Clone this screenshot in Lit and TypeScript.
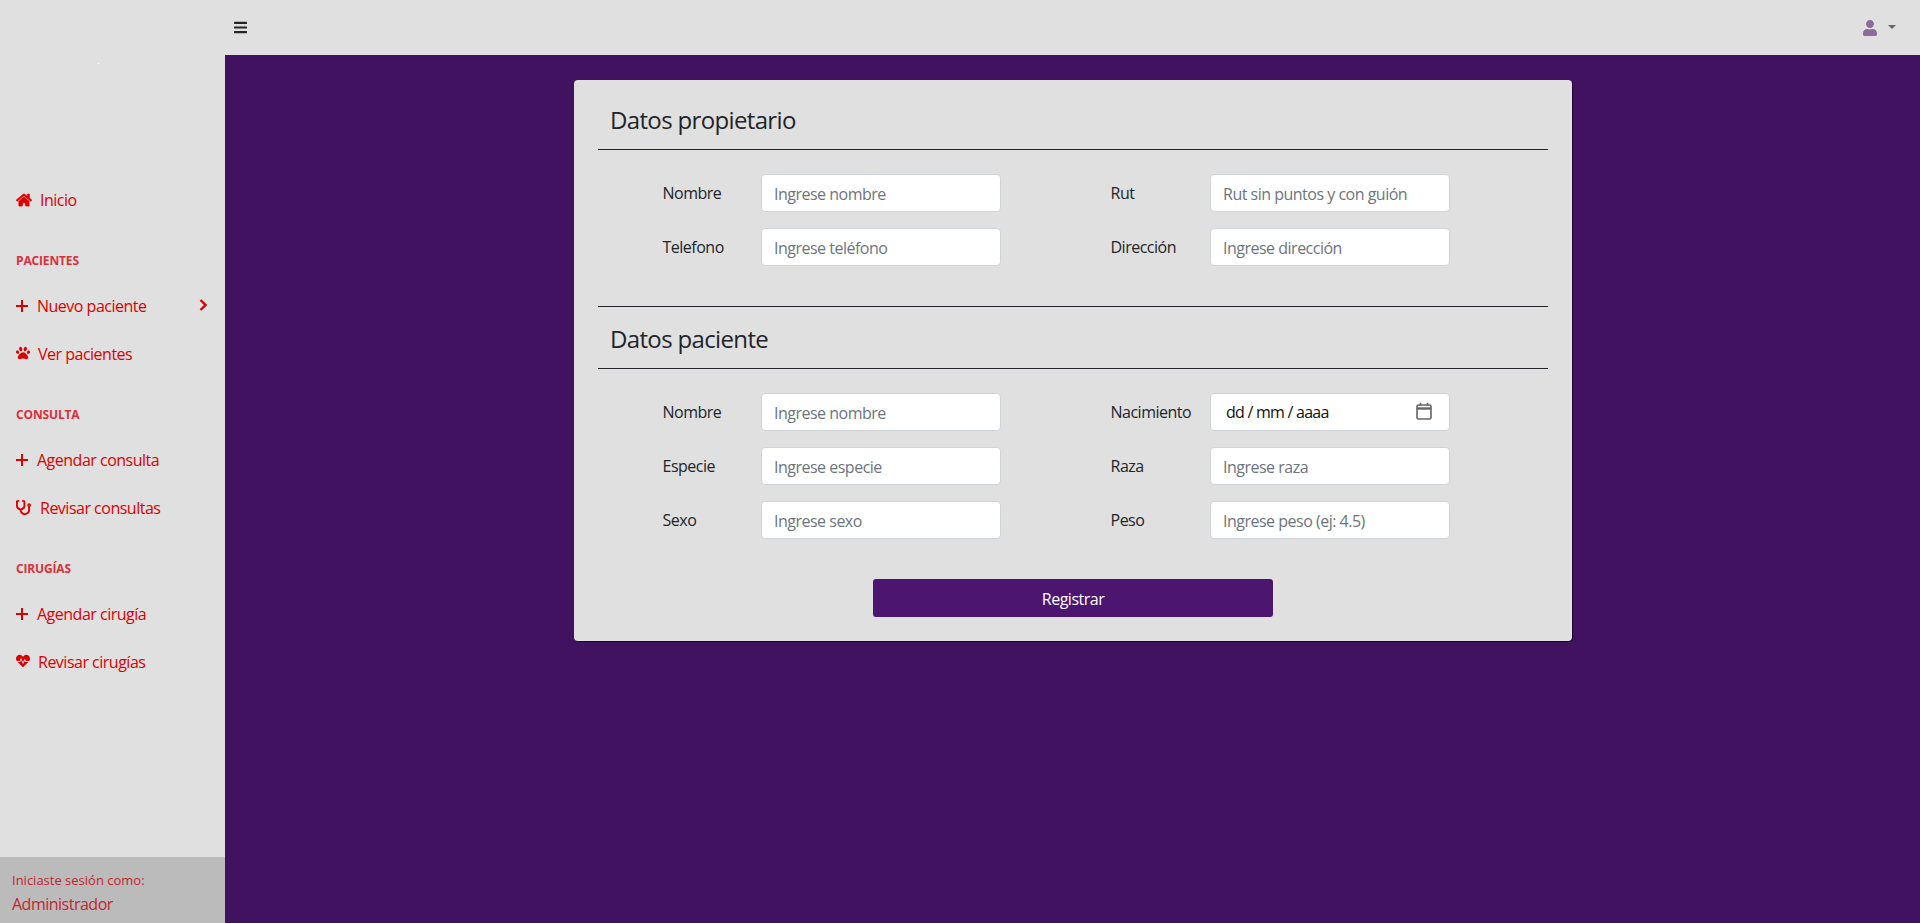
import { LitElement, html, css, svg } from "lit";
import { customElement } from "lit/decorators.js";

const ICONS: Record<string, [number, unknown]> = {
  home: [576, svg`<path d="M280.37 148.26L96 300.11V464a16 16 0 0 0 16 16l112.06-.29a16 16 0 0 0 15.92-16V368a16 16 0 0 1 16-16h64a16 16 0 0 1 16 16v95.64a16 16 0 0 0 16 16.05L464 480a16 16 0 0 0 16-16V300L295.67 148.26a12.19 12.19 0 0 0-15.3 0zM571.6 251.47L488 182.56V44.05a12 12 0 0 0-12-12h-56a12 12 0 0 0-12 12v72.61L318.47 43a48 48 0 0 0-61 0L4.34 251.47a12 12 0 0 0-1.6 16.9l25.5 31A12 12 0 0 0 45.15 301l235.22-193.74a12.19 12.19 0 0 1 15.3 0L530.9 301a12 12 0 0 0 16.9-1.6l25.5-31a12 12 0 0 0-1.7-16.93z" stroke="currentColor" stroke-width="18"/>`],
  paw: [512, svg`<path d="M256 224c-79.41 0-192 122.76-192 200.25 0 34.9 26.81 55.75 71.74 55.75 48.84 0 81.09-25.08 120.26-25.08 39.51 0 71.85 25.08 120.26 25.08 44.93 0 71.74-20.85 71.74-55.75C448 346.76 335.41 224 256 224zm-147.28-12.61c-10.4-34.65-42.44-57.09-71.56-50.13-29.12 6.96-44.29 40.69-33.89 75.34 10.4 34.65 42.44 57.09 71.56 50.13 29.12-6.96 44.29-40.69 33.89-75.34zm84.72-20.78c30.94-8.14 46.42-49.94 34.58-93.36s-46.52-72.01-77.46-63.87-46.42 49.94-34.58 93.36c11.84 43.42 46.52 72.02 77.46 63.87zm281.39-29.34c-29.12-6.96-61.15 15.48-71.56 50.13-10.4 34.65 4.77 68.38 33.89 75.34 29.12 6.96 61.15-15.48 71.56-50.13 10.4-34.65-4.77-68.38-33.89-75.34zm-156.27 29.34c30.94 8.14 65.62-20.45 77.46-63.87 11.84-43.42-3.64-85.21-34.58-93.36s-65.62 20.45-77.46 63.87c-11.84 43.42 3.64 85.22 34.58 93.36z"/>`],
  steth: [512, svg`<path d="M447.1 112c-34.2.5-62.3 28.4-63 62.6-.5 24.3 12.5 45.6 32 56.8V344c0 57.3-50.2 104-112 104-60 0-109.2-44.1-111.9-99.2C265 333.8 320 269.2 320 192V36.6c0-11.4-8.1-21.3-19.3-23.5L237.8.5c-13-2.6-25.6 5.8-28.2 18.8L206.4 35c-2.6 13 5.8 25.6 18.8 28.2l30.7 6.1v121.4c0 52.9-42.2 96.7-95.1 97.2-53.4.5-96.9-42.7-96.9-96V69.4l30.7-6.1c13-2.6 21.4-15.2 18.8-28.2l-3.1-15.7C107.7 6.4 95.1-2 82.1.6L19.3 13C8.1 15.3 0 25.1 0 36.6V192c0 77.3 55.1 142 128.1 156.8C130.7 439.2 208.6 512 304 512c97 0 176-75.4 176-168V231.4c19.1-11.1 32-31.7 32-55.4 0-35.7-29.2-64.5-64.9-64zm.9 80c-8.8 0-16-7.2-16-16s7.2-16 16-16 16 7.2 16 16-7.2 16-16 16z"/>`],
  heart: [512, svg`<path d="M320.2 243.8l-49.7 99.4c-6 12.1-23.4 11.7-28.9-.6l-56.9-126.3-30 71.7H60.6l182.5 186.5c7.1 7.3 18.6 7.3 25.7 0L451.4 288H342.3l-22.1-44.2zM473.7 73.9l-2.4-2.5c-51.5-52.6-135.8-52.6-187.4 0L256 100l-27.9-28.5c-51.5-52.7-135.9-52.7-187.4 0l-2.4 2.4C-10.4 123.7-12.5 203 31 256h102.4l35.9-86.2c5.4-12.9 23.6-13.2 29.4-.4l58.2 129.3 49-97.9c5.9-11.8 22.7-11.8 28.6 0l27.6 55.2H481c43.5-53 41.4-132.3-7.3-182.1z"/>`],
  bars: [448, svg`<path d="M16 132h416c8.837 0 16-7.163 16-16V76c0-8.837-7.163-16-16-16H16C7.163 60 0 67.163 0 76v40c0 8.837 7.163 16 16 16zm0 160h416c8.837 0 16-7.163 16-16v-40c0-8.837-7.163-16-16-16H16c-8.837 0-16 7.163-16 16v40c0 8.837 7.163 16 16 16zm0 160h416c8.837 0 16-7.163 16-16v-40c0-8.837-7.163-16-16-16H16c-8.837 0-16 7.163-16 16v40c0 8.837 7.163 16 16 16z"/>`],
  user: [448, svg`<path d="M224 256c70.7 0 128-57.3 128-128S294.7 0 224 0 96 57.3 96 128s57.3 128 128 128zm89.6 32h-16.7c-22.2 10.2-46.9 16-72.9 16s-50.6-5.8-72.9-16h-16.7C60.2 288 0 348.2 0 422.4V464c0 26.5 21.5 48 48 48h352c26.5 0 48-21.5 48-48v-41.6c0-74.2-60.2-134.4-134.4-134.4z"/>`],
};

function fa(name: string, cls: string) {
  const [w, body] = ICONS[name];
  return html`<svg class=${cls} viewBox="0 0 ${w} 512" fill="currentColor" aria-hidden="true">${body}</svg>`;
}

const plus = html`<svg class="plus" viewBox="0 0 12 12" fill="none" stroke="currentColor" stroke-width="2" aria-hidden="true"><path d="M6 0v12M0 6h12"/></svg>`;

@customElement("app-root")
export class AppRoot extends LitElement {
  static styles = css`
    :host {
      display: grid;
      grid-template-columns: 225px 1fr;
      height: 923px;
      width: 1920px;
      overflow: hidden;
      font-family: "Open Sans", "Noto Sans", sans-serif;
      font-size: 16px;
      color: #212529;
      background: #401260;
    }
    .side {
      background: #e0e0e0;
      display: flex;
      flex-direction: column;
      color: #dc0000;
      height: 923px;
    }
    .logo { height: 176px; padding: 63px 0 0 98px; box-sizing: border-box; }
    .dot { width: 1px; height: 1px; background: #fff; }
    .item { height: 48px; display: flex; align-items: center; padding: 0 16px; box-sizing: border-box; white-space: nowrap; letter-spacing: -0.5px; }
    .ic { display: block; flex: none; }
    .ic-home { width: 16px; height: 14px; margin-right: 8px; margin-top: -1px; }
    .ic-paw { width: 14px; height: 14px; margin-right: 8px; margin-top: -2px; }
    .ic-steth { width: 15px; height: 15px; margin-right: 9px; margin-top: -2px; }
    .ic-heart { width: 14px; height: 14px; margin-right: 8px; margin-top: -2px; }
    .plus { width: 12px; height: 12px; margin-right: 9px; flex: none; margin-top: -1px; }
    .chev { width: 8px; height: 12px; margin-left: auto; margin-right: 2px; flex: none; margin-top: -3px; }
    .head { height: 58px; padding: 28px 16px 0; box-sizing: border-box; font-size: 12px; font-weight: 700; line-height: 18px; color: #d9303c; letter-spacing: -0.15px; }
    .foot { margin-top: auto; height: 66px; background: #bbbbbb; padding: 14px 12px 0; box-sizing: border-box; color: #c2262f; white-space: nowrap; }
    .f1 { font-size: 13px; line-height: 18px; }
    .f2 { font-size: 16px; line-height: 24px; margin-top: 3px; letter-spacing: -0.5px; }

    .right { display: flex; flex-direction: column; min-width: 0; }
    .top { height: 55px; background: #e0e0e0; flex: none; display: flex; align-items: center; justify-content: space-between; padding: 0 24px 0 9px; box-sizing: border-box; }
    .ic-bars { width: 13px; height: 15px; margin-top: -1px; color: #212529; }
    .usr { display: flex; align-items: center; gap: 11px; }
    .ic-user { width: 14px; height: 16px; color: #8c6a9e; margin-top: 1px; }
    .caret { width: 0; height: 0; border-left: 4px solid transparent; border-right: 4px solid transparent; border-top: 4px solid #666; margin-top: -2px; }

    .main { flex: 1; padding: 25px 0 0 349px; }
    .card { width: 998px; height: 561px; box-sizing: border-box; background: #e0e0e0; border-radius: 4px; padding: 0 24px; box-shadow: 1px 1px 1px rgba(0,0,0,.55); display: flex; flex-direction: column; }
    h3 { margin: 0; font-size: 24px; font-weight: 400; line-height: 29px; padding-left: 12px; color: #212529; letter-spacing: -0.65px; flex: none; }
    .t1 { padding-top: 25px; height: 70px; box-sizing: border-box; border-bottom: 1px solid #212529; }
    .t2 { height: 63px; padding-top: 17px; box-sizing: border-box; border-top: 1px solid #212529; border-bottom: 1px solid #212529; }
    .grid { display: grid; grid-template-columns: 448px 448px; grid-auto-rows: 38px; row-gap: 16px; align-content: start; padding: 24px 0 0 65px; flex: none; box-sizing: border-box; }
    .g1 { height: 156px; }
    .g2 { height: 210px; }
    .row { display: flex; align-items: center; height: 38px; }
    label { width: 98.5px; margin-left: -0.5px; flex: none; letter-spacing: -0.5px; }
    .row:nth-child(even) label { width: 99.5px; }
    input, .date { box-sizing: border-box; width: 240px; height: 38px; margin: 0; border: 1px solid #ced4da; border-radius: 4px; background: #fff; font: inherit; letter-spacing: -0.5px; padding: 7px 12px 5px; color: #212529; outline: none; }
    input::placeholder { color: #6c757d; opacity: 1; }
    .date { display: flex; align-items: center; justify-content: space-between; padding: 0 17px 0 15px; color: #111; }
    .date span { letter-spacing: -0.75px; }
    .cal { width: 16px; height: 18px; color: #666; margin-top: -2px; }
    .actions { display: flex; justify-content: center; }
    button { width: 400px; height: 38px; border: none; border-radius: 3px; background: #4b1570; color: #fff; font: inherit; letter-spacing: -0.5px; padding: 1px 0 0; }
  `;

  private field(label: string, placeholder: string) {
    return html`<div class="row"><label>${label}</label><input placeholder=${placeholder} /></div>`;
  }

  render() {
    return html`
      <aside class="side">
        <div class="logo"><div class="dot"></div></div>
        <div class="item">${fa("home", "ic ic-home")}Inicio</div>
        <div class="head">PACIENTES</div>
        <div class="item">${plus}Nuevo paciente<svg class="chev" viewBox="0 0 8 12" fill="none" stroke="currentColor" stroke-width="2.4"><path d="M1.5 1l5 5-5 5"/></svg></div>
        <div class="item">${fa("paw", "ic ic-paw")}Ver pacientes</div>
        <div class="head">CONSULTA</div>
        <div class="item">${plus}Agendar consulta</div>
        <div class="item">${fa("steth", "ic ic-steth")}Revisar consultas</div>
        <div class="head">CIRUGÍAS</div>
        <div class="item">${plus}Agendar cirugía</div>
        <div class="item">${fa("heart", "ic ic-heart")}Revisar cirugías</div>
        <div class="foot">
          <div class="f1">Iniciaste sesión como:</div>
          <div class="f2">Administrador</div>
        </div>
      </aside>
      <div class="right">
        <header class="top">
          ${fa("bars", "ic ic-bars")}
          <div class="usr">${fa("user", "ic ic-user")}<span class="caret"></span></div>
        </header>
        <main class="main">
          <section class="card">
            <h3 class="t1">Datos propietario</h3>
            <div class="grid g1">
              ${this.field("Nombre", "Ingrese nombre")}
              ${this.field("Rut", "Rut sin puntos y con guión")}
              ${this.field("Telefono", "Ingrese teléfono")}
              ${this.field("Dirección", "Ingrese dirección")}
            </div>
            <h3 class="t2">Datos paciente</h3>
            <div class="grid g2">
              ${this.field("Nombre", "Ingrese nombre")}
              <div class="row"><label>Nacimiento</label><div class="date"><span>dd / mm / aaaa</span>
                <svg class="cal" viewBox="0 0 16 18" fill="none" stroke="currentColor" aria-hidden="true"><rect x="1" y="3" width="14" height="14" rx="1.5" stroke-width="1.6"/><path d="M1 6.5h14" stroke-width="2.4"/><path d="M4.5 .8v3M11.5 .8v3" stroke-width="1.6"/></svg>
              </div></div>
              ${this.field("Especie", "Ingrese especie")}
              ${this.field("Raza", "Ingrese raza")}
              ${this.field("Sexo", "Ingrese sexo")}
              ${this.field("Peso", "Ingrese peso (ej: 4.5)")}
            </div>
            <div class="actions"><button>Registrar</button></div>
          </section>
        </main>
      </div>
    `;
  }
}
